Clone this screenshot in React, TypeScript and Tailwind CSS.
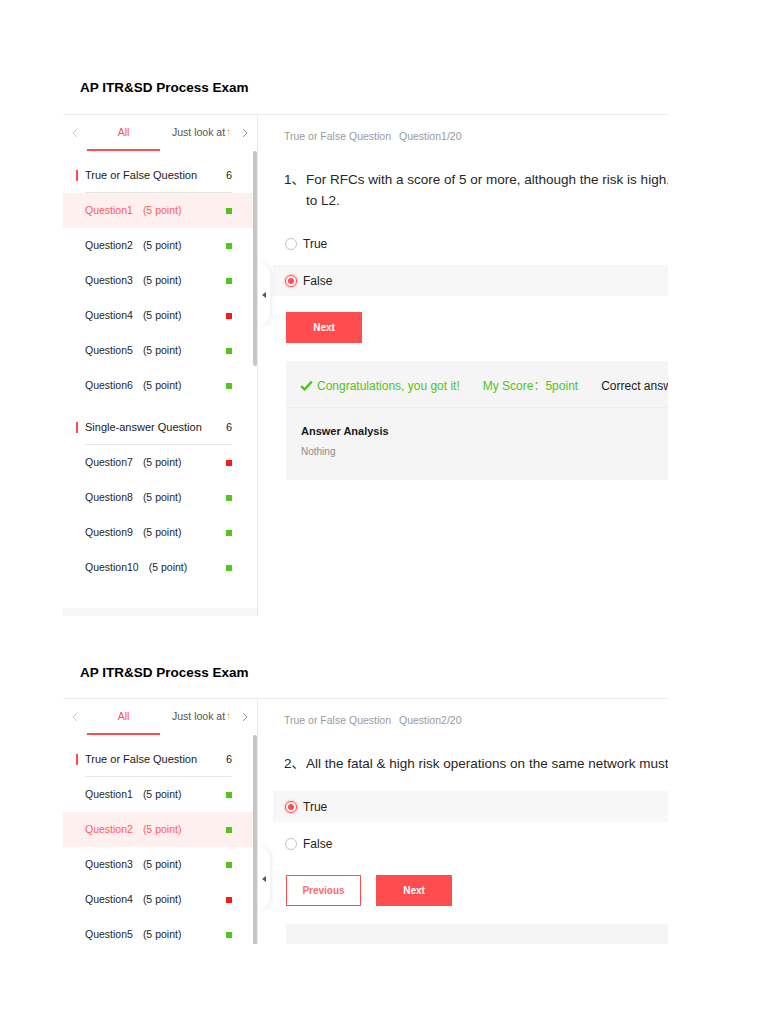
import React from 'react';

type Q = { n: number; ok: boolean };

function Chevron({ dir, color }: { dir: 'l' | 'r'; color: string }) {
  return (
    <svg width="6" height="10" viewBox="0 0 6 10" fill="none">
      <path d={dir === 'l' ? 'M5 1L1 5L5 9' : 'M1 1L5 5L1 9'} stroke={color} strokeWidth="1" />
    </svg>
  );
}

function Row({ q, active }: { q: Q; active?: boolean }) {
  return (
    <div
      className={`flex h-[35px] items-center justify-between pl-[22px] pr-[21px] text-[10.5px] ${
        active ? 'bg-[#fff0f0] text-[#ff5b5b]' : 'text-[#262626]'
      }`}
    >
      <span className="whitespace-nowrap">
        Question{q.n}
        <span className="ml-[10px]">(5 point)</span>
      </span>
      <span className={`h-[6px] w-[6px] ${q.ok ? 'bg-[#52c41a]' : 'bg-[#ff1a1a]'}`} />
    </div>
  );
}

function SectionHeader({ title, count }: { title: string; count: number }) {
  return (
    <div className="relative ml-[22px] mr-[21px] flex justify-between border-b border-[#e6e6e6] pb-[9px] pt-[16px] text-[11px] leading-[16px] text-[#1a1a1a]">
      <span className="absolute left-[-9px] top-[19px] h-[11px] w-[2px] bg-[#ff4d4f]" />
      <span>{title}</span>
      <span>{count}</span>
    </div>
  );
}

function Tabs() {
  return (
    <div className="flex h-[36px] shrink-0 items-stretch">
      <div className="flex w-[24px] items-center justify-center">
        <Chevron dir="l" color="#c8c8c8" />
      </div>
      <div className="flex w-[73px] items-center justify-center border-b-2 border-[#ff4d4f] pt-[2px] text-[10.5px] text-[#ff4d4f]">
        All
      </div>
      <div className="flex flex-1 items-center pl-[12px]">
        <div className="w-[57px] overflow-hidden whitespace-nowrap text-[10.5px] text-[#555]">Just look at the wrong</div>
      </div>
      <div className="flex w-[24px] items-center justify-center">
        <Chevron dir="r" color="#999" />
      </div>
    </div>
  );
}

function Radio({ checked }: { checked: boolean }) {
  return checked ? (
    <span className="flex h-[12px] w-[12px] items-center justify-center rounded-full border border-[#ff4d4f] bg-white shadow-[0_0_0_1.5px_rgba(255,77,79,0.18)]">
      <span className="h-[6px] w-[6px] rounded-full bg-[#ff4d4f]" />
    </span>
  ) : (
    <span className="h-[12px] w-[12px] rounded-full border border-[#c4c4c4] bg-white" />
  );
}

function Option({ label, checked, first }: { label: string; checked: boolean; first?: boolean }) {
  return (
    <div
      className={`flex h-[31px] items-center gap-[6px] pl-[12px] text-[12px] text-[#222] ${first ? 'mt-[17px]' : 'mt-[6px]'} ${
        checked ? 'bg-[#f7f7f7]' : ''
      }`}
    >
      <Radio checked={checked} />
      <span>{label}</span>
    </div>
  );
}

function Exam({
  height,
  index,
  lines,
  answer,
  list,
  showPrev,
  feedback,
  thumb,
  strip,
}: {
  height: string;
  index: number;
  lines: string[];
  answer: 'True' | 'False';
  list: React.ReactNode;
  showPrev?: boolean;
  feedback?: boolean;
  thumb: string;
  strip?: boolean;
}) {
  return (
    <div className={`ml-[63px] flex w-[605px] overflow-hidden border-t border-[#ebebeb] ${height}`}>
      {/* left panel */}
      <div className="flex w-[195px] shrink-0 flex-col border-r border-[#e8e8e8]">
        <Tabs />
        <div className="relative flex-1 overflow-hidden">
          <div className="mr-[4px]">{list}</div>
          <div className={`absolute right-0 top-0 w-[4px] rounded-full bg-[#c6c6c8] ${thumb}`} />
        </div>
        {strip && <div className="h-[8px] shrink-0 bg-[#f5f6f8]" />}
      </div>

      {/* right panel */}
      <div className="relative min-w-0 flex-1 overflow-hidden pl-[15px]">
        <div className="whitespace-nowrap pl-[11px] pt-[14px] text-[10.5px] leading-[14px] text-[#9a9a9a]">
          True or False Question
          <span className="ml-[8px]">Question{index}/20</span>
        </div>
        <div className="mt-[26px] flex whitespace-nowrap pl-[11px] text-[13.5px] leading-[21px] text-[#262626]">
          <span className="w-[22px] shrink-0">{index}、</span>
          <div>
            {lines.map((l) => (
              <div key={l}>{l}</div>
            ))}
          </div>
        </div>
        <Option label="True" checked={answer === 'True'} first />
        <Option label="False" checked={answer === 'False'} />
        <div className="ml-[13px] mt-[16px] flex gap-[15px]">
          {showPrev && (
            <div className="flex h-[31px] w-[75px] items-center justify-center border border-[#ff4d4f] bg-white text-[10px] font-bold text-[#ff6b6b]">
              Previous
            </div>
          )}
          <div className="flex h-[31px] w-[76px] items-center justify-center bg-[#ff4d4f] text-[10px] font-bold text-white">
            Next
          </div>
        </div>
        {feedback ? (
          <div className="ml-[13px] mt-[18px] h-[119px] w-[600px] bg-[#f5f5f5]">
            <div className="flex h-[47px] items-center gap-[23px] whitespace-nowrap border-b border-[#ededed] pl-[14px] pt-[3px] text-[12px]">
              <span className="flex items-center gap-[4px] text-[#52c41a]">
                <svg width="13" height="11" viewBox="0 0 13 11">
                  <path d="M1.2 6.2L4.6 9.4L11.8 1.6" stroke="#52c41a" strokeWidth="2.4" fill="none" />
                </svg>
                Congratulations, you got it!
              </span>
              <span className="text-[#52c41a]">My Score：5point</span>
              <span className="text-[#1a1a1a]">Correct answer：False</span>
            </div>
            <div className="pl-[15px] pt-[16px]">
              <div className="text-[11px] font-bold leading-[14px] text-[#1a1a1a]">Answer Analysis</div>
              <div className="mt-[7px] text-[10px] leading-[14px] text-[#8c8c8c]">Nothing</div>
            </div>
          </div>
        ) : (
          <div className="ml-[13px] mt-[18px] h-[119px] w-[600px] bg-[#f5f5f5]" />
        )}

        {/* collapse handle */}
        <div className="absolute left-0 top-[148px] flex h-[63px] w-[12px] items-center rounded-r-[12px] bg-white pl-[4px] shadow-[2px_0_4px_rgba(0,0,0,0.07)]">
          <span className="h-0 w-0 border-y-[3px] border-r-[4px] border-y-transparent border-r-[#555]" />
        </div>
      </div>
    </div>
  );
}

export default function App() {
  const sec1: Q[] = [
    { n: 1, ok: true },
    { n: 2, ok: true },
    { n: 3, ok: true },
    { n: 4, ok: false },
    { n: 5, ok: true },
    { n: 6, ok: true },
  ];
  const sec2: Q[] = [
    { n: 7, ok: false },
    { n: 8, ok: true },
    { n: 9, ok: true },
    { n: 10, ok: true },
  ];

  const list1 = (
    <>
      <SectionHeader title="True or False Question" count={6} />
      {sec1.map((q) => (
        <Row key={q.n} q={q} active={q.n === 1} />
      ))}
      <SectionHeader title="Single-answer Question" count={6} />
      {sec2.map((q) => (
        <Row key={q.n} q={q} />
      ))}
    </>
  );

  const list2 = (
    <>
      <SectionHeader title="True or False Question" count={6} />
      {sec1.slice(0, 5).map((q) => (
        <Row key={q.n} q={q} active={q.n === 2} />
      ))}
    </>
  );

  return (
    <div className="h-[1024px] w-[768px] overflow-hidden bg-white pt-[80px] font-['Liberation_Sans','Noto_Sans_CJK_SC',sans-serif]">
      <div className="mb-[18px] pl-[80px] text-[13.5px] font-bold leading-[16px] text-black">{'AP ITR&SD Process Exam'}</div>
      <Exam
        height="h-[502px]"
        index={1}
        lines={['For RFCs with a score of 5 or more, although the risk is high, they should be escalated', 'to L2.']}
        answer="False"
        list={list1}
        feedback
        thumb="h-[215px]"
        strip
      />
      <div className="mb-[17px] mt-[49px] pl-[80px] text-[13.5px] font-bold leading-[16px] text-black">
        {'AP ITR&SD Process Exam'}
      </div>
      <Exam
        height="h-[246px]"
        index={2}
        lines={['All the fatal & high risk operations on the same network must be approved']}
        answer="True"
        list={list2}
        showPrev
        thumb="h-[300px]"
      />
    </div>
  );
}
